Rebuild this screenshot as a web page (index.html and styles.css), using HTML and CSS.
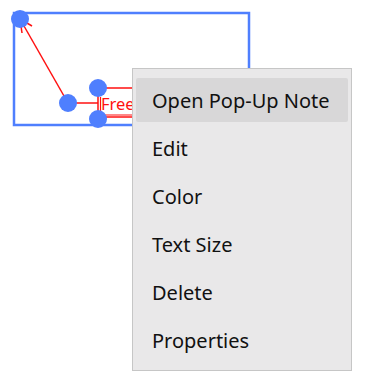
FILE: index.html
```html
<!DOCTYPE html>
<html>
<head>
<meta charset="utf-8">
<link rel="stylesheet" href="styles.css">
</head>
<body>
<div class="canvas">
  <svg class="drawing" width="374" height="385" viewBox="0 0 374 385">
    <rect x="14" y="13" width="235" height="112" fill="none" stroke="#4f7ffe" stroke-width="2.5"/>
    <line x1="68" y1="103" x2="20" y2="19" stroke="#ff1010" stroke-width="1.5"/>
    <line x1="20" y1="19" x2="22" y2="33" stroke="#ff1010" stroke-width="1.5"/>
    <line x1="20" y1="19" x2="32" y2="26" stroke="#ff1010" stroke-width="1.5"/>
    <line x1="68" y1="103" x2="98" y2="103" stroke="#ff1010" stroke-width="1.5"/>
    <rect x="98" y="88" width="60" height="29" fill="#fff" stroke="#ff1010" stroke-width="1.5"/>
    <line x1="100.5" y1="97" x2="100.5" y2="112" stroke="#ff1010" stroke-width="1.2"/>
    <line x1="98" y1="115" x2="158" y2="115" stroke="#ff1010" stroke-width="1.2"/>
    <text x="101" y="109.5" class="free">Free</text>
    <circle cx="20" cy="19" r="9" fill="#4f7ffe"/>
    <circle cx="68" cy="103" r="9" fill="#4f7ffe"/>
    <circle cx="98" cy="88" r="9" fill="#4f7ffe"/>
    <circle cx="98" cy="119" r="9" fill="#4f7ffe"/>
  </svg>
  <div class="menu">
    <div class="item active"><span>Open Pop-Up Note</span></div>
    <div class="item"><span>Edit</span></div>
    <div class="item"><span>Color</span></div>
    <div class="item"><span>Text Size</span></div>
    <div class="item"><span>Delete</span></div>
    <div class="item"><span>Properties</span></div>
  </div>
</div>
</body>
</html>
```

FILE: styles.css
```css
html, body {
  margin: 0;
  padding: 0;
  background: #ffffff;
}
.canvas {
  position: relative;
  width: 374px;
  height: 385px;
  overflow: hidden;
}
.drawing {
  position: absolute;
  left: 0;
  top: 0;
}
.free {
  font-family: "Noto Sans", "Open Sans", sans-serif;
  font-size: 16.5px;
  fill: #ff1010;
}
.menu {
  position: absolute;
  left: 132px;
  top: 68px;
  width: 218px;
  box-sizing: content-box;
  border: 1px solid #c6c6c6;
  background: #e9e8e9;
  padding: 7px 0 6px;
  display: flex;
  flex-direction: column;
  font-family: "Noto Sans", "Open Sans", sans-serif;
  font-size: 20px;
  color: #111111;
}
.item {
  height: 48px;
  padding: 2px 3px;
  box-sizing: border-box;
  display: flex;
}
.item span {
  flex: 1;
  display: flex;
  align-items: center;
  padding-left: 16px;
  border-radius: 2px;
}
.item.active span {
  background: #d8d7d8;
}
```
